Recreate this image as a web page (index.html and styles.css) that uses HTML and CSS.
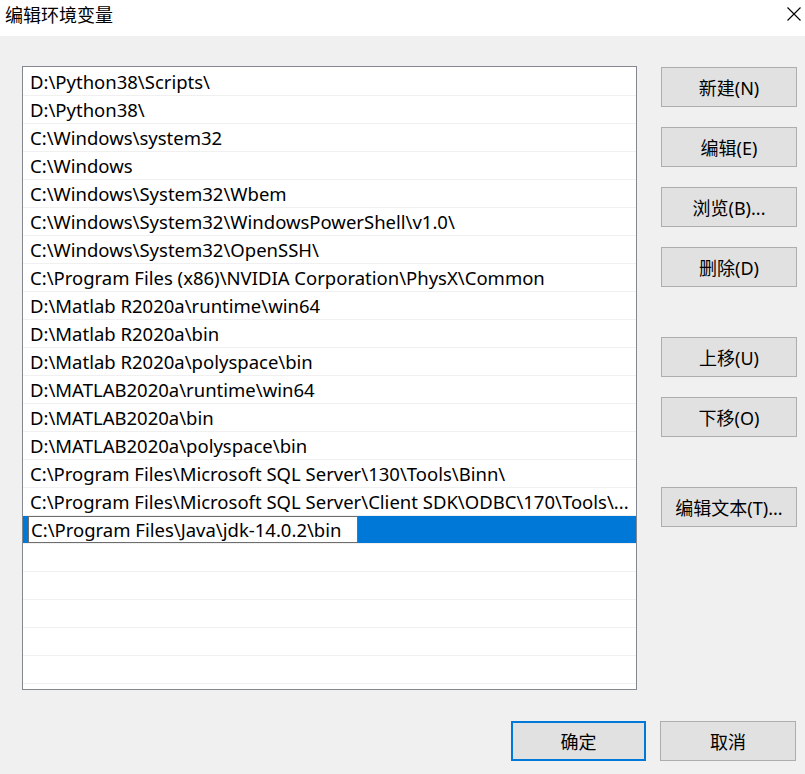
FILE: index.html
```html
<!DOCTYPE html>
<html lang="zh-CN">

<head>
    <meta charset="UTF-8">
    <meta name="viewport" content="width=device-width, initial-scale=1.0">
    <title>编辑环境变量</title>
    <link rel="stylesheet" href="styles.css">
</head>

<body>
    <div class="titlebar">
        <span class="title">编辑环境变量</span>
        <svg class="close" width="14" height="14" viewBox="0 0 14 14">
            <path d="M0.5 0.5 L13.5 13.5 M13.5 0.5 L0.5 13.5" stroke="#000" stroke-width="1.1" fill="none" />
        </svg>
    </div>

    <div class="dialog">
        <div class="content">
            <div class="list">
                <div class="row">D:\Python38\Scripts\</div>
                <div class="row">D:\Python38\</div>
                <div class="row">C:\Windows\system32</div>
                <div class="row">C:\Windows</div>
                <div class="row">C:\Windows\System32\Wbem</div>
                <div class="row">C:\Windows\System32\WindowsPowerShell\v1.0\</div>
                <div class="row">C:\Windows\System32\OpenSSH\</div>
                <div class="row">C:\Program Files (x86)\NVIDIA Corporation\PhysX\Common</div>
                <div class="row">D:\Matlab R2020a\runtime\win64</div>
                <div class="row">D:\Matlab R2020a\bin</div>
                <div class="row">D:\Matlab R2020a\polyspace\bin</div>
                <div class="row">D:\MATLAB2020a\runtime\win64</div>
                <div class="row">D:\MATLAB2020a\bin</div>
                <div class="row">D:\MATLAB2020a\polyspace\bin</div>
                <div class="row">C:\Program Files\Microsoft SQL Server\130\Tools\Binn\</div>
                <div class="row">C:\Program Files\Microsoft SQL Server\Client SDK\ODBC\170\Tools\...</div>
                <div class="row selected">
                    <input class="edit" type="text" value="C:\Program Files\Java\jdk-14.0.2\bin">
                </div>
                <div class="row"></div>
                <div class="row"></div>
                <div class="row"></div>
                <div class="row"></div>
                <div class="row"></div>
                <div class="row"></div>
            </div>

            <div class="side">
                <div class="group">
                    <button class="btn">新建(N)</button>
                    <button class="btn">编辑(E)</button>
                    <button class="btn">浏览(B)...</button>
                    <button class="btn">删除(D)</button>
                </div>
                <div class="group">
                    <button class="btn">上移(U)</button>
                    <button class="btn">下移(O)</button>
                </div>
                <div class="group">
                    <button class="btn">编辑文本(T)...</button>
                </div>
            </div>
        </div>

        <div class="footer">
            <button class="btn default">确定</button>
            <button class="btn">取消</button>
        </div>
    </div>
</body>

</html>
```

FILE: styles.css
```css
:root {
    --face: #f0f0f0;
    --button: #e1e1e1;
    --button-border: #adadad;
    --accent: #0078d7;
    --font-family: 'Noto Sans', 'Noto Sans CJK SC', sans-serif;
}

body {
    margin: 0;
    padding: 0;
    width: 805px;
    height: 774px;
    overflow: hidden;
    font-family: var(--font-family);
    font-size: 18.5px;
    color: #000;
    background: var(--face);
}

.titlebar {
    height: 36px;
    background: white;
    display: flex;
    align-items: center;
    justify-content: space-between;
    padding: 0 4px 0 5px;
}

.title {
    font-family: 'Noto Sans CJK SC', sans-serif;
    font-size: 18px;
    margin-top: -9px;
}

.close {
    margin-top: -8px;
}

.dialog {
    padding: 30px 8px 0 22px;
}

.content {
    display: flex;
    gap: 24px;
}

.list {
    width: 614px;
    height: 621px;
    padding-top: 1px;
    border: 1px solid #828790;
    background: white;
    overflow: hidden;
}

.row {
    height: 27px;
    line-height: 27px;
    border-bottom: 1px solid #f0f0f0;
    padding-left: 7px;
    white-space: nowrap;
    overflow: hidden;
}

.row.selected {
    background: var(--accent);
    padding-left: 0;
    display: flex;
    align-items: flex-end;
}

.edit {
    width: 330px;
    height: 27px;
    box-sizing: border-box;
    margin: 0 0 0 5px;
    padding: 0 2px 1px 2px;
    border: 1px solid #6e6e6e;
    font-family: var(--font-family);
    font-size: 18.5px;
    color: #000;
    background: white;
    outline: none;
}

.side {
    display: flex;
    flex-direction: column;
    gap: 50px;
    padding-top: 1px;
}

.group {
    display: flex;
    flex-direction: column;
    gap: 20px;
}

.btn {
    width: 136px;
    height: 40px;
    margin: 0;
    padding: 0;
    background: var(--button);
    border: 1px solid var(--button-border);
    border-radius: 0;
    font-family: var(--font-family);
    font-size: 18px;
    color: #000;
}

.btn.default {
    width: 135px;
    border: 2px solid var(--accent);
}

.footer {
    display: flex;
    justify-content: flex-end;
    gap: 14px;
    margin-top: 31px;
    padding-right: 1px;
}
```
